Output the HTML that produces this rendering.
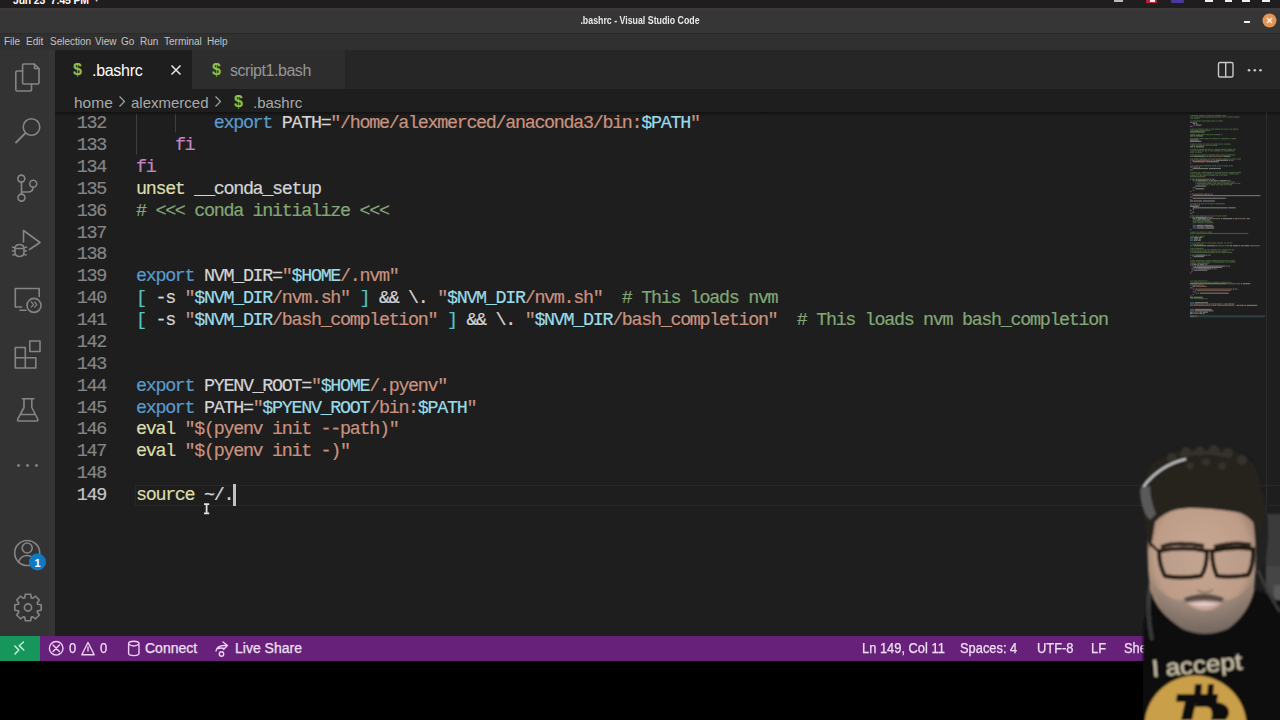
<!DOCTYPE html>
<html><head><meta charset="utf-8">
<style>
*{margin:0;padding:0;box-sizing:border-box}
html,body{width:1280px;height:720px;overflow:hidden;background:#000;font-family:"Liberation Sans",sans-serif}
.abs{position:absolute}
#osbar{left:0;top:0;width:1280px;height:8px;background:#1f1d1e}
#title{left:0;top:8px;width:1280px;height:25px;background:#363636;border-top:3px solid #3b393a}
#menu{left:0;top:33px;width:1280px;height:17px;background:linear-gradient(#2a2a2a 0,#2a2a2a 1px,#303030 1px,#303030 4px,#353535 4px,#353535 5px,#2c2c2c 5px,#2c2c2c 6px,#303030 6px)}
#act{left:0;top:50px;width:55px;height:586px;background:linear-gradient(90deg,#333 0,#333 49px,#363636 49px,#353535 55px)}
#tabs{left:55px;top:50px;width:1225px;height:39px;background:#262626}
#editor{left:55px;top:89px;width:1225px;height:547px;background:#1e1e1e}
#status{left:0;top:636px;width:1280px;height:25px;background:#68217a}
#remote{left:0;top:636px;width:40px;height:25px;background:#17965c}
.row{position:absolute;left:55px;width:1225px;height:21.875px;line-height:21.875px;font-family:"Liberation Mono",monospace;font-size:18.4px;letter-spacing:-1.32px;-webkit-text-stroke:0.2px;white-space:pre;color:#d4d4d4}
.ln{position:absolute;left:0;width:51px;text-align:right;color:#858585}
.ln.cur{color:#c6c6c6}
.cl{position:absolute;left:81px}
.k{color:#5a9bcc}.s{color:#c9927f}.v{color:#9adbe6}.f{color:#dcdcaa}.c{color:#82a676}.p{color:#c586c0}.b{color:#56c4c0}
.ui{position:absolute;white-space:pre}
.menu span{position:absolute;top:36px;font-size:10px;color:#c4c4c4}
.tab{position:absolute;top:50px;height:39px}
.dollar{color:#8dc149;font-weight:bold}
svg{position:absolute;overflow:visible}
.st{position:absolute;top:636px;height:25px;line-height:25px;font-size:14px;color:#f0e0f4;-webkit-text-stroke:0.25px #f0e0f4;transform-origin:0 50%;transform:scaleX(0.92)}
.st.w{transform:none}
.ico{fill:none;stroke:#858585;stroke-width:1.6;stroke-linecap:round;stroke-linejoin:round}
.sico{fill:none;stroke:#f0d0f6;stroke-width:1.4;stroke-linecap:round;stroke-linejoin:round}
</style></head><body>
<div id="osbar" class="abs"></div>
<div class="ui" style="left:13px;top:-6.5px;font-size:10.5px;letter-spacing:-0.2px;color:#fff;font-weight:bold">Jun 23  7:45 PM</div>
<div class="ui" style="left:94px;top:-7px;font-size:10px;color:#ddd">&#9662;</div>
<svg style="left:0;top:0" width="1280" height="10"><rect x="1114" y="0" width="9" height="2" fill="#bbb"/><rect x="1146" y="0" width="11" height="3" rx="1" fill="#c02040"/><rect x="1150" y="0" width="5" height="2" fill="#eee"/><rect x="1171" y="0" width="13" height="3" rx="1" fill="#4a3aa0"/><rect x="1205" y="0" width="8" height="2" fill="#eee"/><rect x="1225" y="0" width="7" height="2" fill="#eee"/><rect x="1242" y="0" width="8" height="2" fill="#eee"/><rect x="1262" y="0" width="8" height="2" fill="#eee"/></svg>
<div id="title" class="abs"></div>
<div class="ui" style="left:0;top:14px;width:1280px;text-align:center;font-size:11px;color:#e8e8e8;font-weight:bold;transform:scaleX(0.8)">.bashrc - Visual Studio Code</div>
<div id="menu" class="abs"></div>
<div class="menu">
<span style="left:4px">File</span><span style="left:26px">Edit</span><span style="left:50px">Selection</span><span style="left:95px">View</span><span style="left:121px">Go</span><span style="left:140px">Run</span><span style="left:164px">Terminal</span><span style="left:207px">Help</span>
</div>
<div id="act" class="abs"></div>
<div id="tabs" class="abs"></div>
<div class="tab" style="left:55px;width:137px;background:#1e1e1e"></div>
<div class="tab" style="left:192px;width:153px;background:#2d2d2d"></div>
<div id="editor" class="abs"></div>
<div class="ui" style="left:73px;top:59px;font-size:16px;line-height:22px"><span class="dollar">$</span></div>
<div class="ui" style="left:92px;top:59.5px;font-size:16px;letter-spacing:-0.3px;line-height:22px;color:#ffffff">.bashrc</div>
<svg style="left:0;top:0" width="1280" height="720">
 <path d="M171.5 65.5 L180.5 74.5 M180.5 65.5 L171.5 74.5" stroke="#e8e8e8" stroke-width="1.5"/>
</svg>
<div class="ui" style="left:212px;top:59px;font-size:16px;line-height:22px"><span class="dollar">$</span></div>
<div class="ui" style="left:230px;top:59.5px;font-size:16px;letter-spacing:-0.45px;line-height:22px;color:#969696">script1.bash</div>
<div class="ui" style="left:74px;top:91.5px;font-size:15.5px;line-height:22px;color:#a9a9a9">home</div>
<div class="ui" style="left:131px;top:91.5px;font-size:15px;line-height:22px;color:#a9a9a9">alexmerced</div>
<div class="ui" style="left:234px;top:91px;font-size:16px;line-height:22px"><span class="dollar">$</span></div>
<div class="ui" style="left:253px;top:91.5px;font-size:15px;line-height:22px;color:#a9a9a9">.bashrc</div>
<svg style="left:0;top:0" width="1280" height="720">
 <path d="M119.5 96.5 L124.5 101.5 L119.5 106.5 M215.5 96.5 L220.5 101.5 L215.5 106.5" fill="none" stroke="#a0a0a0" stroke-width="1.2"/>
 <!-- split editor + more -->
 <rect x="1218.5" y="62.5" width="14.5" height="14.5" rx="1.5" fill="none" stroke="#c8c8c8" stroke-width="1.4"/>
 <path d="M1225.7 62.5 V77" stroke="#c8c8c8" stroke-width="1.4"/>
 <circle cx="1249" cy="70.2" r="1.3" fill="#c8c8c8"/><circle cx="1254.8" cy="70.2" r="1.3" fill="#c8c8c8"/><circle cx="1260.5" cy="70.2" r="1.3" fill="#c8c8c8"/>
 <!-- title buttons -->
 <path d="M1244 22 H1250" stroke="#f0f0f0" stroke-width="2"/>
 <circle cx="1269.5" cy="20.5" r="7" fill="#e0955a"/>
 <path d="M1267 18 L1272 23 M1272 18 L1267 23" stroke="#fff3e0" stroke-width="1.3"/>
 <!-- indent guides -->
 <path d="M136.5 112 V154.5 M175.5 112 V132.5" stroke="#404040" stroke-width="1"/>
</svg>
<!-- scroll shadow -->
<div class="abs" style="left:55px;top:112px;width:1225px;height:4px;background:linear-gradient(#111,rgba(0,0,0,0))"></div>
<div class="row" style="top:113.200px"><span class="ln">132</span><span class="cl">        <span class="k">export</span> PATH=<span class="s">"/home/alexmerced/anaconda3/bin:</span><span class="v">$PATH</span><span class="s">"</span></span></div>
<div class="row" style="top:135.075px"><span class="ln">133</span><span class="cl">    <span class="p">fi</span></span></div>
<div class="row" style="top:156.950px"><span class="ln">134</span><span class="cl"><span class="p">fi</span></span></div>
<div class="row" style="top:178.825px"><span class="ln">135</span><span class="cl"><span class="f">unset</span> __conda_setup</span></div>
<div class="row" style="top:200.700px"><span class="ln">136</span><span class="cl"><span class="c"># &lt;&lt;&lt; conda initialize &lt;&lt;&lt;</span></span></div>
<div class="row" style="top:222.575px"><span class="ln">137</span><span class="cl"></span></div>
<div class="row" style="top:244.450px"><span class="ln">138</span><span class="cl"></span></div>
<div class="row" style="top:266.325px"><span class="ln">139</span><span class="cl"><span class="k">export</span> NVM_DIR=<span class="s">"</span><span class="v">$HOME</span><span class="s">/.nvm"</span></span></div>
<div class="row" style="top:288.200px"><span class="ln">140</span><span class="cl"><span class="b">[</span> -s <span class="s">"</span><span class="v">$NVM_DIR</span><span class="s">/nvm.sh"</span> <span class="b">]</span> &amp;&amp; \. <span class="s">"</span><span class="v">$NVM_DIR</span><span class="s">/nvm.sh"</span>  <span class="c"># This loads nvm</span></span></div>
<div class="row" style="top:310.075px"><span class="ln">141</span><span class="cl"><span class="b">[</span> -s <span class="s">"</span><span class="v">$NVM_DIR</span><span class="s">/bash_completion"</span> <span class="b">]</span> &amp;&amp; \. <span class="s">"</span><span class="v">$NVM_DIR</span><span class="s">/bash_completion"</span>  <span class="c"># This loads nvm bash_completion</span></span></div>
<div class="row" style="top:331.950px"><span class="ln">142</span><span class="cl"></span></div>
<div class="row" style="top:353.825px"><span class="ln">143</span><span class="cl"></span></div>
<div class="row" style="top:375.700px"><span class="ln">144</span><span class="cl"><span class="k">export</span> PYENV_ROOT=<span class="s">"</span><span class="v">$HOME</span><span class="s">/.pyenv"</span></span></div>
<div class="row" style="top:397.575px"><span class="ln">145</span><span class="cl"><span class="k">export</span> PATH=<span class="s">"</span><span class="v">$PYENV_ROOT</span><span class="s">/bin:</span><span class="v">$PATH</span><span class="s">"</span></span></div>
<div class="row" style="top:419.450px"><span class="ln">146</span><span class="cl"><span class="f">eval</span> <span class="s">"$(pyenv init --path)"</span></span></div>
<div class="row" style="top:441.325px"><span class="ln">147</span><span class="cl"><span class="f">eval</span> <span class="s">"$(pyenv init -)"</span></span></div>
<div class="row" style="top:463.200px"><span class="ln">148</span><span class="cl"></span></div>
<div class="row" style="top:485.075px"><span class="ln cur">149</span><span class="cl"><span class="f">source</span> ~/.</span></div>
<!-- current line border -->
<div class="abs" style="left:135px;top:484.5px;width:1145px;height:21.5px;border:1px solid #282828;border-right:none"></div>
<div class="abs" style="left:233px;top:484px;width:2.5px;height:22px;background:#c0c0c0"></div>
<svg style="left:0;top:0" width="300" height="600"><path d="M204 504.2 H209.2 M206.6 504.2 V513.2 M204 513.4 H209.2" stroke="#e0e0e0" stroke-width="1.8" fill="none"/></svg>
<!-- activity icons -->
<svg style="left:0;top:0" width="55" height="636">
 <g class="ico">
  <path d="M22.5 71 H17 Q15.8 71 15.8 72.2 V89.8 Q15.8 91 17 91 H30.3 Q31.5 91 31.5 89.8 V84"/>
  <path d="M23.8 64 H34.5 L39 68.5 V82.8 Q39 84 37.8 84 H23.8 Q22.6 84 22.6 82.8 V65.2 Q22.6 64 23.8 64 Z M34.5 64 V68.5 H39"/>
  <circle cx="31.5" cy="127" r="8.3"/>
  <path d="M25.5 133 L16 142.5" stroke-width="1.9"/>
  <circle cx="21.3" cy="178.6" r="3.5"/><circle cx="33.2" cy="183.8" r="3.5"/><circle cx="21.5" cy="197.6" r="3.5"/>
  <path d="M21.5 182 V194 M33 187.3 Q33 192 28 192 H22"/>
  <path d="M23.5 242 V230.5 L40 242.5 L29.5 249.5"/>
  <path d="M15 249 Q15 244.5 19.5 244.5 Q24 244.5 24 249 V252 Q24 256.5 19.5 256.5 Q15 256.5 15 252 Z M15 248.5 H24 M12.5 247 L15 248 M12.5 251 H15 M13 255 L15.5 254 M26.5 247 L24 248 M26.5 251 H24 M26 255 L23.5 254"/>
  <path d="M21.5 307 H15.3 V288.5 H39.2 V296.5 M20 310.3 H26"/>
  <circle cx="34" cy="305.4" r="7"/>
  <path d="M31.3 302 L33.6 304.6 L31.3 307.2 M34.6 302 L36.9 304.6 L34.6 307.2" stroke-width="1.2"/>
  <path d="M15.3 347.5 H25.3 V368 H15.3 Z M15.3 357.8 H35.8 V368 H25.3 M29.8 341 H40 V351.5 H29.8 Z"/>
  <path d="M22.5 398.8 H33.8 M24 398.8 V407.5 L17.8 419 Q17 421 19 421 H36.5 Q38.5 421 37.7 419 L31.8 407.5 V398.8 M20.5 414.5 H35.2"/>
 </g>
 <circle cx="18.5" cy="465.5" r="1.4" fill="#858585"/><circle cx="27.5" cy="465.5" r="1.4" fill="#858585"/><circle cx="36.5" cy="465.5" r="1.4" fill="#858585"/>
 <g class="ico">
  <circle cx="27.2" cy="553" r="12.5"/>
  <circle cx="27.2" cy="548" r="5"/>
  <path d="M18.5 562 Q21 555.5 27.2 555.5 Q33.4 555.5 36 562"/>
  <path d="M37.6 604.2 L41.2 604.8 L41.2 610.2 L37.6 610.8 L37.2 612.0 L39.3 615.0 L35.5 618.8 L32.5 616.7 L31.3 617.1 L30.7 620.7 L25.3 620.7 L24.7 617.1 L23.5 616.7 L20.5 618.8 L16.7 615.0 L18.8 612.0 L18.4 610.8 L14.8 610.2 L14.8 604.8 L18.4 604.2 L18.8 603.0 L16.7 600.0 L20.5 596.2 L23.5 598.3 L24.7 597.9 L25.3 594.3 L30.7 594.3 L31.3 597.9 L32.5 598.3 L35.5 596.2 L39.3 600.0 L37.2 603.0 Z"/>
  <circle cx="28" cy="607.5" r="3.6"/>
 </g>
 <circle cx="37.5" cy="562" r="8.5" fill="#0e7ac4"/>
 <text x="37.5" y="566.5" text-anchor="middle" font-size="11" font-weight="bold" fill="#fff" font-family="Liberation Sans">1</text>
</svg>
<svg style="left:0;top:0" width="1280" height="720"><defs><filter id="mb" x="-5%" y="-5%" width="110%" height="110%"><feGaussianBlur stdDeviation="0.6"/></filter></defs><g opacity="0.45" filter="url(#mb)"><rect x="1190.0" y="115.0" width="0.7" height="1.2" fill="#6a9955"/><rect x="1191.3" y="115.0" width="6.7" height="1.2" fill="#6a9955"/><rect x="1198.7" y="115.0" width="5.4" height="1.2" fill="#6a9955"/><rect x="1204.7" y="115.0" width="1.3" height="1.2" fill="#6a9955"/><rect x="1206.8" y="115.0" width="4.7" height="1.2" fill="#6a9955"/><rect x="1212.1" y="115.0" width="2.0" height="1.2" fill="#6a9955"/><rect x="1214.8" y="115.0" width="6.0" height="1.2" fill="#6a9955"/><rect x="1221.5" y="115.0" width="4.7" height="1.2" fill="#6a9955"/><rect x="1190.0" y="116.4" width="0.7" height="1.2" fill="#6a9955"/><rect x="1191.3" y="116.4" width="2.0" height="1.2" fill="#6a9955"/><rect x="1194.0" y="116.4" width="28.1" height="1.2" fill="#6a9955"/><rect x="1222.8" y="116.4" width="2.0" height="1.2" fill="#6a9955"/><rect x="1225.5" y="116.4" width="2.0" height="1.2" fill="#6a9955"/><rect x="1228.2" y="116.4" width="4.7" height="1.2" fill="#6a9955"/><rect x="1233.5" y="116.4" width="6.0" height="1.2" fill="#6a9955"/><rect x="1190.0" y="117.7" width="0.7" height="1.2" fill="#6a9955"/><rect x="1191.3" y="117.7" width="2.0" height="1.2" fill="#6a9955"/><rect x="1194.0" y="117.7" width="5.4" height="1.2" fill="#6a9955"/><rect x="1190.0" y="120.4" width="0.7" height="1.2" fill="#6a9955"/><rect x="1191.3" y="120.4" width="1.3" height="1.2" fill="#6a9955"/><rect x="1193.3" y="120.4" width="2.0" height="1.2" fill="#6a9955"/><rect x="1196.0" y="120.4" width="4.7" height="1.2" fill="#6a9955"/><rect x="1201.4" y="120.4" width="9.4" height="1.2" fill="#6a9955"/><rect x="1211.4" y="120.4" width="3.4" height="1.2" fill="#6a9955"/><rect x="1215.5" y="120.4" width="1.3" height="1.2" fill="#6a9955"/><rect x="1217.5" y="120.4" width="5.4" height="1.2" fill="#6a9955"/><rect x="1190.0" y="121.8" width="2.7" height="1.2" fill="#c586c0"/><rect x="1193.3" y="121.8" width="1.3" height="1.2" fill="#d4d4d4"/><rect x="1195.4" y="121.8" width="1.3" height="1.2" fill="#d4d4d4"/><rect x="1192.7" y="123.1" width="2.7" height="1.2" fill="#d4d4d4"/><rect x="1196.0" y="123.1" width="1.3" height="1.2" fill="#d4d4d4"/><rect x="1194.0" y="124.5" width="1.3" height="1.2" fill="#d4d4d4"/><rect x="1196.0" y="124.5" width="5.4" height="1.2" fill="#d4d4d4"/><rect x="1190.0" y="125.8" width="2.7" height="1.2" fill="#c586c0"/><rect x="1190.0" y="128.6" width="0.7" height="1.2" fill="#6a9955"/><rect x="1191.3" y="128.6" width="3.4" height="1.2" fill="#6a9955"/><rect x="1195.4" y="128.6" width="2.0" height="1.2" fill="#6a9955"/><rect x="1198.0" y="128.6" width="6.0" height="1.2" fill="#6a9955"/><rect x="1204.7" y="128.6" width="3.4" height="1.2" fill="#6a9955"/><rect x="1208.8" y="128.6" width="1.3" height="1.2" fill="#6a9955"/><rect x="1210.8" y="128.6" width="3.4" height="1.2" fill="#6a9955"/><rect x="1214.8" y="128.6" width="5.4" height="1.2" fill="#6a9955"/><rect x="1220.8" y="128.6" width="2.7" height="1.2" fill="#6a9955"/><rect x="1224.2" y="128.6" width="3.4" height="1.2" fill="#6a9955"/><rect x="1228.2" y="128.6" width="1.3" height="1.2" fill="#6a9955"/><rect x="1230.2" y="128.6" width="2.0" height="1.2" fill="#6a9955"/><rect x="1232.9" y="128.6" width="5.4" height="1.2" fill="#6a9955"/><rect x="1190.0" y="129.9" width="0.7" height="1.2" fill="#6a9955"/><rect x="1191.3" y="129.9" width="2.0" height="1.2" fill="#6a9955"/><rect x="1194.0" y="129.9" width="4.7" height="1.2" fill="#6a9955"/><rect x="1199.4" y="129.9" width="2.0" height="1.2" fill="#6a9955"/><rect x="1202.1" y="129.9" width="2.7" height="1.2" fill="#6a9955"/><rect x="1205.4" y="129.9" width="4.7" height="1.2" fill="#6a9955"/><rect x="1190.0" y="131.3" width="14.7" height="1.2" fill="#d4d4d4"/><rect x="1190.0" y="134.0" width="0.7" height="1.2" fill="#6a9955"/><rect x="1191.3" y="134.0" width="4.0" height="1.2" fill="#6a9955"/><rect x="1196.0" y="134.0" width="1.3" height="1.2" fill="#6a9955"/><rect x="1198.0" y="134.0" width="2.0" height="1.2" fill="#6a9955"/><rect x="1200.7" y="134.0" width="4.7" height="1.2" fill="#6a9955"/><rect x="1206.1" y="134.0" width="3.4" height="1.2" fill="#6a9955"/><rect x="1210.1" y="134.0" width="3.4" height="1.2" fill="#6a9955"/><rect x="1214.1" y="134.0" width="6.0" height="1.2" fill="#6a9955"/><rect x="1220.8" y="134.0" width="1.3" height="1.2" fill="#6a9955"/><rect x="1190.0" y="135.3" width="3.4" height="1.2" fill="#d4d4d4"/><rect x="1194.0" y="135.3" width="1.3" height="1.2" fill="#d4d4d4"/><rect x="1196.0" y="135.3" width="6.7" height="1.2" fill="#d4d4d4"/><rect x="1190.0" y="138.0" width="0.7" height="1.2" fill="#6a9955"/><rect x="1191.3" y="138.0" width="2.0" height="1.2" fill="#6a9955"/><rect x="1194.0" y="138.0" width="4.7" height="1.2" fill="#6a9955"/><rect x="1199.4" y="138.0" width="4.7" height="1.2" fill="#6a9955"/><rect x="1204.7" y="138.0" width="4.0" height="1.2" fill="#6a9955"/><rect x="1209.4" y="138.0" width="2.0" height="1.2" fill="#6a9955"/><rect x="1212.1" y="138.0" width="5.4" height="1.2" fill="#6a9955"/><rect x="1218.1" y="138.0" width="2.0" height="1.2" fill="#6a9955"/><rect x="1220.8" y="138.0" width="8.0" height="1.2" fill="#6a9955"/><rect x="1229.5" y="138.0" width="1.3" height="1.2" fill="#6a9955"/><rect x="1231.5" y="138.0" width="4.7" height="1.2" fill="#6a9955"/><rect x="1190.0" y="139.4" width="8.7" height="1.2" fill="#d4d4d4"/><rect x="1190.0" y="140.8" width="11.4" height="1.2" fill="#d4d4d4"/><rect x="1190.0" y="143.5" width="0.7" height="1.2" fill="#6a9955"/><rect x="1191.3" y="143.5" width="3.4" height="1.2" fill="#6a9955"/><rect x="1195.4" y="143.5" width="2.0" height="1.2" fill="#6a9955"/><rect x="1198.0" y="143.5" width="4.0" height="1.2" fill="#6a9955"/><rect x="1202.7" y="143.5" width="2.7" height="1.2" fill="#6a9955"/><rect x="1206.1" y="143.5" width="3.4" height="1.2" fill="#6a9955"/><rect x="1210.1" y="143.5" width="2.7" height="1.2" fill="#6a9955"/><rect x="1213.5" y="143.5" width="4.7" height="1.2" fill="#6a9955"/><rect x="1218.8" y="143.5" width="2.7" height="1.2" fill="#6a9955"/><rect x="1222.2" y="143.5" width="1.3" height="1.2" fill="#6a9955"/><rect x="1224.2" y="143.5" width="6.7" height="1.2" fill="#6a9955"/><rect x="1190.0" y="144.8" width="0.7" height="1.2" fill="#6a9955"/><rect x="1191.3" y="144.8" width="4.0" height="1.2" fill="#6a9955"/><rect x="1196.0" y="144.8" width="2.0" height="1.2" fill="#6a9955"/><rect x="1198.7" y="144.8" width="4.0" height="1.2" fill="#6a9955"/><rect x="1203.4" y="144.8" width="1.3" height="1.2" fill="#6a9955"/><rect x="1205.4" y="144.8" width="3.4" height="1.2" fill="#6a9955"/><rect x="1209.4" y="144.8" width="2.0" height="1.2" fill="#6a9955"/><rect x="1212.1" y="144.8" width="5.4" height="1.2" fill="#6a9955"/><rect x="1190.0" y="146.2" width="3.4" height="1.2" fill="#d4d4d4"/><rect x="1194.0" y="146.2" width="1.3" height="1.2" fill="#d4d4d4"/><rect x="1196.0" y="146.2" width="8.0" height="1.2" fill="#d4d4d4"/><rect x="1190.0" y="148.9" width="0.7" height="1.2" fill="#6a9955"/><rect x="1191.3" y="148.9" width="1.3" height="1.2" fill="#6a9955"/><rect x="1193.3" y="148.9" width="2.7" height="1.2" fill="#6a9955"/><rect x="1196.7" y="148.9" width="2.0" height="1.2" fill="#6a9955"/><rect x="1199.4" y="148.9" width="4.7" height="1.2" fill="#6a9955"/><rect x="1204.7" y="148.9" width="2.7" height="1.2" fill="#6a9955"/><rect x="1208.1" y="148.9" width="2.7" height="1.2" fill="#6a9955"/><rect x="1211.4" y="148.9" width="1.3" height="1.2" fill="#6a9955"/><rect x="1213.5" y="148.9" width="0.7" height="1.2" fill="#6a9955"/><rect x="1214.8" y="148.9" width="5.4" height="1.2" fill="#6a9955"/><rect x="1220.8" y="148.9" width="6.0" height="1.2" fill="#6a9955"/><rect x="1227.5" y="148.9" width="4.7" height="1.2" fill="#6a9955"/><rect x="1232.9" y="148.9" width="2.7" height="1.2" fill="#6a9955"/><rect x="1190.0" y="150.2" width="0.7" height="1.2" fill="#6a9955"/><rect x="1191.3" y="150.2" width="3.4" height="1.2" fill="#6a9955"/><rect x="1195.4" y="150.2" width="2.0" height="1.2" fill="#6a9955"/><rect x="1198.0" y="150.2" width="3.4" height="1.2" fill="#6a9955"/><rect x="1202.1" y="150.2" width="2.0" height="1.2" fill="#6a9955"/><rect x="1204.7" y="150.2" width="2.7" height="1.2" fill="#6a9955"/><rect x="1208.1" y="150.2" width="1.3" height="1.2" fill="#6a9955"/><rect x="1210.1" y="150.2" width="2.7" height="1.2" fill="#6a9955"/><rect x="1213.5" y="150.2" width="7.4" height="1.2" fill="#6a9955"/><rect x="1221.5" y="150.2" width="2.0" height="1.2" fill="#6a9955"/><rect x="1224.2" y="150.2" width="10.1" height="1.2" fill="#6a9955"/><rect x="1190.0" y="151.6" width="4.0" height="1.2" fill="#6a9955"/><rect x="1194.7" y="151.6" width="1.3" height="1.2" fill="#6a9955"/><rect x="1196.7" y="151.6" width="5.4" height="1.2" fill="#6a9955"/><rect x="1190.0" y="154.3" width="0.7" height="1.2" fill="#6a9955"/><rect x="1191.3" y="154.3" width="2.7" height="1.2" fill="#6a9955"/><rect x="1194.7" y="154.3" width="2.7" height="1.2" fill="#6a9955"/><rect x="1198.0" y="154.3" width="2.7" height="1.2" fill="#6a9955"/><rect x="1201.4" y="154.3" width="5.4" height="1.2" fill="#6a9955"/><rect x="1207.4" y="154.3" width="2.0" height="1.2" fill="#6a9955"/><rect x="1210.1" y="154.3" width="5.4" height="1.2" fill="#6a9955"/><rect x="1216.1" y="154.3" width="3.4" height="1.2" fill="#6a9955"/><rect x="1220.2" y="154.3" width="4.0" height="1.2" fill="#6a9955"/><rect x="1224.8" y="154.3" width="2.0" height="1.2" fill="#6a9955"/><rect x="1227.5" y="154.3" width="7.4" height="1.2" fill="#6a9955"/><rect x="1190.0" y="155.7" width="0.7" height="1.2" fill="#d4d4d4"/><rect x="1191.3" y="155.7" width="1.3" height="1.2" fill="#d4d4d4"/><rect x="1193.3" y="155.7" width="11.4" height="1.2" fill="#d4d4d4"/><rect x="1205.4" y="155.7" width="0.7" height="1.2" fill="#d4d4d4"/><rect x="1206.8" y="155.7" width="1.3" height="1.2" fill="#d4d4d4"/><rect x="1208.8" y="155.7" width="2.7" height="1.2" fill="#d4d4d4"/><rect x="1212.1" y="155.7" width="10.7" height="1.2" fill="#ce9178"/><rect x="1223.5" y="155.7" width="6.7" height="1.2" fill="#d4d4d4"/><rect x="1190.0" y="158.4" width="0.7" height="1.2" fill="#6a9955"/><rect x="1191.3" y="158.4" width="2.0" height="1.2" fill="#6a9955"/><rect x="1194.0" y="158.4" width="5.4" height="1.2" fill="#6a9955"/><rect x="1200.0" y="158.4" width="7.4" height="1.2" fill="#6a9955"/><rect x="1208.1" y="158.4" width="2.0" height="1.2" fill="#6a9955"/><rect x="1210.8" y="158.4" width="4.0" height="1.2" fill="#6a9955"/><rect x="1215.5" y="158.4" width="2.0" height="1.2" fill="#6a9955"/><rect x="1218.1" y="158.4" width="2.7" height="1.2" fill="#6a9955"/><rect x="1221.5" y="158.4" width="1.3" height="1.2" fill="#6a9955"/><rect x="1223.5" y="158.4" width="3.4" height="1.2" fill="#6a9955"/><rect x="1227.5" y="158.4" width="1.3" height="1.2" fill="#6a9955"/><rect x="1229.5" y="158.4" width="2.0" height="1.2" fill="#6a9955"/><rect x="1232.2" y="158.4" width="4.0" height="1.2" fill="#6a9955"/><rect x="1236.9" y="158.4" width="4.0" height="1.2" fill="#6a9955"/><rect x="1190.0" y="159.7" width="1.3" height="1.2" fill="#c586c0"/><rect x="1192.0" y="159.7" width="0.7" height="1.2" fill="#d4d4d4"/><rect x="1193.3" y="159.7" width="1.3" height="1.2" fill="#d4d4d4"/><rect x="1195.4" y="159.7" width="13.4" height="1.2" fill="#ce9178"/><rect x="1209.4" y="159.7" width="0.7" height="1.2" fill="#d4d4d4"/><rect x="1210.8" y="159.7" width="1.3" height="1.2" fill="#d4d4d4"/><rect x="1212.8" y="159.7" width="0.7" height="1.2" fill="#d4d4d4"/><rect x="1214.1" y="159.7" width="1.3" height="1.2" fill="#d4d4d4"/><rect x="1216.1" y="159.7" width="12.1" height="1.2" fill="#d4d4d4"/><rect x="1228.9" y="159.7" width="1.3" height="1.2" fill="#d4d4d4"/><rect x="1230.9" y="159.7" width="2.7" height="1.2" fill="#c586c0"/><rect x="1192.7" y="161.1" width="12.7" height="1.2" fill="#d4d4d4"/><rect x="1206.1" y="161.1" width="12.7" height="1.2" fill="#d4d4d4"/><rect x="1190.0" y="162.4" width="1.3" height="1.2" fill="#c586c0"/><rect x="1190.0" y="165.2" width="0.7" height="1.2" fill="#6a9955"/><rect x="1191.3" y="165.2" width="2.0" height="1.2" fill="#6a9955"/><rect x="1194.0" y="165.2" width="0.7" height="1.2" fill="#6a9955"/><rect x="1195.4" y="165.2" width="3.4" height="1.2" fill="#6a9955"/><rect x="1199.4" y="165.2" width="4.0" height="1.2" fill="#6a9955"/><rect x="1204.1" y="165.2" width="7.4" height="1.2" fill="#6a9955"/><rect x="1212.1" y="165.2" width="4.0" height="1.2" fill="#6a9955"/><rect x="1216.8" y="165.2" width="1.3" height="1.2" fill="#6a9955"/><rect x="1218.8" y="165.2" width="2.7" height="1.2" fill="#6a9955"/><rect x="1222.2" y="165.2" width="1.3" height="1.2" fill="#6a9955"/><rect x="1224.2" y="165.2" width="4.0" height="1.2" fill="#6a9955"/><rect x="1228.9" y="165.2" width="4.0" height="1.2" fill="#6a9955"/><rect x="1190.0" y="166.5" width="2.7" height="1.2" fill="#c586c0"/><rect x="1193.3" y="166.5" width="4.7" height="1.2" fill="#ce9178"/><rect x="1198.7" y="166.5" width="1.3" height="1.2" fill="#d4d4d4"/><rect x="1192.7" y="167.9" width="15.4" height="1.2" fill="#d4d4d4"/><rect x="1208.8" y="167.9" width="12.1" height="1.2" fill="#d4d4d4"/><rect x="1190.0" y="169.2" width="2.7" height="1.2" fill="#c586c0"/><rect x="1190.0" y="171.9" width="0.7" height="1.2" fill="#6a9955"/><rect x="1191.3" y="171.9" width="6.0" height="1.2" fill="#6a9955"/><rect x="1198.0" y="171.9" width="2.0" height="1.2" fill="#6a9955"/><rect x="1200.7" y="171.9" width="0.7" height="1.2" fill="#6a9955"/><rect x="1202.1" y="171.9" width="4.7" height="1.2" fill="#6a9955"/><rect x="1207.4" y="171.9" width="4.7" height="1.2" fill="#6a9955"/><rect x="1212.8" y="171.9" width="1.3" height="1.2" fill="#6a9955"/><rect x="1214.8" y="171.9" width="2.0" height="1.2" fill="#6a9955"/><rect x="1217.5" y="171.9" width="5.4" height="1.2" fill="#6a9955"/><rect x="1223.5" y="171.9" width="2.0" height="1.2" fill="#6a9955"/><rect x="1226.2" y="171.9" width="2.0" height="1.2" fill="#6a9955"/><rect x="1228.9" y="171.9" width="7.4" height="1.2" fill="#6a9955"/><rect x="1236.9" y="171.9" width="4.0" height="1.2" fill="#6a9955"/><rect x="1190.0" y="173.3" width="0.7" height="1.2" fill="#6a9955"/><rect x="1191.3" y="173.3" width="2.0" height="1.2" fill="#6a9955"/><rect x="1194.0" y="173.3" width="1.3" height="1.2" fill="#6a9955"/><rect x="1196.0" y="173.3" width="4.7" height="1.2" fill="#6a9955"/><rect x="1201.4" y="173.3" width="1.3" height="1.2" fill="#6a9955"/><rect x="1203.4" y="173.3" width="2.0" height="1.2" fill="#6a9955"/><rect x="1206.1" y="173.3" width="5.4" height="1.2" fill="#6a9955"/><rect x="1212.1" y="173.3" width="2.0" height="1.2" fill="#6a9955"/><rect x="1214.8" y="173.3" width="3.4" height="1.2" fill="#6a9955"/><rect x="1218.8" y="173.3" width="2.0" height="1.2" fill="#6a9955"/><rect x="1221.5" y="173.3" width="3.4" height="1.2" fill="#6a9955"/><rect x="1225.5" y="173.3" width="1.3" height="1.2" fill="#6a9955"/><rect x="1227.5" y="173.3" width="0.7" height="1.2" fill="#6a9955"/><rect x="1228.9" y="173.3" width="5.4" height="1.2" fill="#6a9955"/><rect x="1234.9" y="173.3" width="4.0" height="1.2" fill="#6a9955"/><rect x="1190.0" y="174.7" width="0.7" height="1.2" fill="#6a9955"/><rect x="1191.3" y="174.7" width="4.0" height="1.2" fill="#6a9955"/><rect x="1196.0" y="174.7" width="1.3" height="1.2" fill="#6a9955"/><rect x="1198.0" y="174.7" width="1.3" height="1.2" fill="#6a9955"/><rect x="1200.0" y="174.7" width="2.0" height="1.2" fill="#6a9955"/><rect x="1202.7" y="174.7" width="4.0" height="1.2" fill="#6a9955"/><rect x="1207.4" y="174.7" width="1.3" height="1.2" fill="#6a9955"/><rect x="1209.4" y="174.7" width="6.0" height="1.2" fill="#6a9955"/><rect x="1216.1" y="174.7" width="2.0" height="1.2" fill="#6a9955"/><rect x="1218.8" y="174.7" width="1.3" height="1.2" fill="#6a9955"/><rect x="1220.8" y="174.7" width="2.0" height="1.2" fill="#6a9955"/><rect x="1223.5" y="174.7" width="4.0" height="1.2" fill="#6a9955"/><rect x="1190.0" y="176.0" width="15.4" height="1.2" fill="#6a9955"/><rect x="1190.0" y="178.7" width="1.3" height="1.2" fill="#c586c0"/><rect x="1192.0" y="178.7" width="0.7" height="1.2" fill="#d4d4d4"/><rect x="1193.3" y="178.7" width="1.3" height="1.2" fill="#d4d4d4"/><rect x="1195.4" y="178.7" width="14.1" height="1.2" fill="#ce9178"/><rect x="1210.1" y="178.7" width="1.3" height="1.2" fill="#d4d4d4"/><rect x="1212.1" y="178.7" width="2.7" height="1.2" fill="#c586c0"/><rect x="1192.7" y="180.1" width="1.3" height="1.2" fill="#c586c0"/><rect x="1194.7" y="180.1" width="0.7" height="1.2" fill="#d4d4d4"/><rect x="1196.0" y="180.1" width="1.3" height="1.2" fill="#d4d4d4"/><rect x="1198.0" y="180.1" width="8.7" height="1.2" fill="#d4d4d4"/><rect x="1207.4" y="180.1" width="0.7" height="1.2" fill="#d4d4d4"/><rect x="1208.8" y="180.1" width="1.3" height="1.2" fill="#d4d4d4"/><rect x="1210.8" y="180.1" width="2.7" height="1.2" fill="#d4d4d4"/><rect x="1214.1" y="180.1" width="3.4" height="1.2" fill="#d4d4d4"/><rect x="1218.1" y="180.1" width="0.7" height="1.2" fill="#d4d4d4"/><rect x="1219.5" y="180.1" width="8.0" height="1.2" fill="#d4d4d4"/><rect x="1228.2" y="180.1" width="2.7" height="1.2" fill="#c586c0"/><rect x="1195.4" y="181.4" width="0.7" height="1.2" fill="#6a9955"/><rect x="1196.7" y="181.4" width="1.3" height="1.2" fill="#6a9955"/><rect x="1198.7" y="181.4" width="2.7" height="1.2" fill="#6a9955"/><rect x="1202.1" y="181.4" width="3.4" height="1.2" fill="#6a9955"/><rect x="1206.1" y="181.4" width="5.4" height="1.2" fill="#6a9955"/><rect x="1212.1" y="181.4" width="4.0" height="1.2" fill="#6a9955"/><rect x="1216.8" y="181.4" width="2.7" height="1.2" fill="#6a9955"/><rect x="1220.2" y="181.4" width="6.0" height="1.2" fill="#6a9955"/><rect x="1226.8" y="181.4" width="2.7" height="1.2" fill="#6a9955"/><rect x="1230.2" y="181.4" width="4.7" height="1.2" fill="#6a9955"/><rect x="1195.4" y="182.8" width="0.7" height="1.2" fill="#6a9955"/><rect x="1196.7" y="182.8" width="10.1" height="1.2" fill="#6a9955"/><rect x="1207.4" y="182.8" width="3.4" height="1.2" fill="#6a9955"/><rect x="1211.4" y="182.8" width="1.3" height="1.2" fill="#6a9955"/><rect x="1213.5" y="182.8" width="2.7" height="1.2" fill="#6a9955"/><rect x="1216.8" y="182.8" width="4.7" height="1.2" fill="#6a9955"/><rect x="1222.2" y="182.8" width="1.3" height="1.2" fill="#6a9955"/><rect x="1224.2" y="182.8" width="6.0" height="1.2" fill="#6a9955"/><rect x="1230.9" y="182.8" width="3.4" height="1.2" fill="#6a9955"/><rect x="1234.9" y="182.8" width="2.0" height="1.2" fill="#6a9955"/><rect x="1237.6" y="182.8" width="2.7" height="1.2" fill="#6a9955"/><rect x="1195.4" y="184.1" width="0.7" height="1.2" fill="#6a9955"/><rect x="1196.7" y="184.1" width="0.7" height="1.2" fill="#6a9955"/><rect x="1198.0" y="184.1" width="2.7" height="1.2" fill="#6a9955"/><rect x="1201.4" y="184.1" width="3.4" height="1.2" fill="#6a9955"/><rect x="1205.4" y="184.1" width="2.7" height="1.2" fill="#6a9955"/><rect x="1208.8" y="184.1" width="1.3" height="1.2" fill="#6a9955"/><rect x="1210.8" y="184.1" width="4.7" height="1.2" fill="#6a9955"/><rect x="1216.1" y="184.1" width="2.7" height="1.2" fill="#6a9955"/><rect x="1219.5" y="184.1" width="4.0" height="1.2" fill="#6a9955"/><rect x="1224.2" y="184.1" width="2.7" height="1.2" fill="#6a9955"/><rect x="1227.5" y="184.1" width="4.7" height="1.2" fill="#6a9955"/><rect x="1195.4" y="185.5" width="10.7" height="1.2" fill="#d4d4d4"/><rect x="1192.7" y="186.9" width="2.7" height="1.2" fill="#c586c0"/><rect x="1195.4" y="188.2" width="8.7" height="1.2" fill="#d4d4d4"/><rect x="1192.7" y="189.6" width="1.3" height="1.2" fill="#c586c0"/><rect x="1190.0" y="190.9" width="1.3" height="1.2" fill="#c586c0"/><rect x="1190.0" y="193.6" width="1.3" height="1.2" fill="#c586c0"/><rect x="1192.0" y="193.6" width="0.7" height="1.2" fill="#d4d4d4"/><rect x="1193.3" y="193.6" width="10.1" height="1.2" fill="#ce9178"/><rect x="1204.1" y="193.6" width="0.7" height="1.2" fill="#d4d4d4"/><rect x="1205.4" y="193.6" width="2.0" height="1.2" fill="#d4d4d4"/><rect x="1208.1" y="193.6" width="1.3" height="1.2" fill="#d4d4d4"/><rect x="1210.1" y="193.6" width="2.7" height="1.2" fill="#c586c0"/><rect x="1192.7" y="195.0" width="67.7" height="1.2" fill="#d4d4d4"/><rect x="1190.0" y="196.3" width="2.7" height="1.2" fill="#c586c0"/><rect x="1192.7" y="197.7" width="32.8" height="1.2" fill="#d4d4d4"/><rect x="1226.2" y="197.7" width="0.7" height="1.2" fill="#ce9178"/><rect x="1190.0" y="199.1" width="1.3" height="1.2" fill="#c586c0"/><rect x="1190.0" y="200.4" width="3.4" height="1.2" fill="#d4d4d4"/><rect x="1194.0" y="200.4" width="8.0" height="1.2" fill="#d4d4d4"/><rect x="1202.7" y="200.4" width="12.1" height="1.2" fill="#d4d4d4"/><rect x="1190.0" y="203.1" width="0.7" height="1.2" fill="#6a9955"/><rect x="1191.3" y="203.1" width="1.3" height="1.2" fill="#6a9955"/><rect x="1193.3" y="203.1" width="2.7" height="1.2" fill="#6a9955"/><rect x="1196.7" y="203.1" width="1.3" height="1.2" fill="#6a9955"/><rect x="1198.7" y="203.1" width="1.3" height="1.2" fill="#6a9955"/><rect x="1200.7" y="203.1" width="3.4" height="1.2" fill="#6a9955"/><rect x="1204.7" y="203.1" width="2.0" height="1.2" fill="#6a9955"/><rect x="1207.4" y="203.1" width="2.0" height="1.2" fill="#6a9955"/><rect x="1210.1" y="203.1" width="3.4" height="1.2" fill="#6a9955"/><rect x="1214.1" y="203.1" width="1.3" height="1.2" fill="#6a9955"/><rect x="1216.1" y="203.1" width="8.7" height="1.2" fill="#6a9955"/><rect x="1190.0" y="204.5" width="2.7" height="1.2" fill="#c586c0"/><rect x="1193.3" y="204.5" width="4.7" height="1.2" fill="#ce9178"/><rect x="1198.7" y="204.5" width="1.3" height="1.2" fill="#d4d4d4"/><rect x="1190.0" y="205.8" width="8.7" height="1.2" fill="#d4d4d4"/><rect x="1192.7" y="207.2" width="34.8" height="1.2" fill="#d4d4d4"/><rect x="1228.2" y="207.2" width="7.4" height="1.2" fill="#d4d4d4"/><rect x="1192.7" y="208.5" width="1.3" height="1.2" fill="#d4d4d4"/><rect x="1190.0" y="209.9" width="1.3" height="1.2" fill="#d4d4d4"/><rect x="1192.7" y="211.3" width="1.3" height="1.2" fill="#d4d4d4"/><rect x="1190.0" y="212.6" width="2.7" height="1.2" fill="#c586c0"/><rect x="1190.0" y="215.3" width="0.7" height="1.2" fill="#6a9955"/><rect x="1191.3" y="215.3" width="4.0" height="1.2" fill="#6a9955"/><rect x="1196.0" y="215.3" width="3.4" height="1.2" fill="#6a9955"/><rect x="1200.0" y="215.3" width="4.7" height="1.2" fill="#6a9955"/><rect x="1205.4" y="215.3" width="1.3" height="1.2" fill="#6a9955"/><rect x="1207.4" y="215.3" width="1.3" height="1.2" fill="#6a9955"/><rect x="1209.4" y="215.3" width="2.0" height="1.2" fill="#6a9955"/><rect x="1212.1" y="215.3" width="2.7" height="1.2" fill="#6a9955"/><rect x="1215.5" y="215.3" width="2.0" height="1.2" fill="#6a9955"/><rect x="1218.1" y="215.3" width="3.4" height="1.2" fill="#6a9955"/><rect x="1222.2" y="215.3" width="4.7" height="1.2" fill="#6a9955"/><rect x="1190.0" y="216.7" width="1.3" height="1.2" fill="#c586c0"/><rect x="1192.0" y="216.7" width="0.7" height="1.2" fill="#d4d4d4"/><rect x="1193.3" y="216.7" width="1.3" height="1.2" fill="#d4d4d4"/><rect x="1195.4" y="216.7" width="12.1" height="1.2" fill="#d4d4d4"/><rect x="1208.1" y="216.7" width="1.3" height="1.2" fill="#d4d4d4"/><rect x="1210.1" y="216.7" width="2.7" height="1.2" fill="#c586c0"/><rect x="1192.7" y="218.0" width="2.7" height="1.2" fill="#d4d4d4"/><rect x="1196.0" y="218.0" width="1.3" height="1.2" fill="#d4d4d4"/><rect x="1198.0" y="218.0" width="8.0" height="1.2" fill="#d4d4d4"/><rect x="1206.8" y="218.0" width="1.3" height="1.2" fill="#d4d4d4"/><rect x="1208.8" y="218.0" width="2.7" height="1.2" fill="#d4d4d4"/><rect x="1212.1" y="218.0" width="8.0" height="1.2" fill="#ce9178"/><rect x="1220.8" y="218.0" width="1.3" height="1.2" fill="#d4d4d4"/><rect x="1222.8" y="218.0" width="9.4" height="1.2" fill="#d4d4d4"/><rect x="1232.9" y="218.0" width="1.3" height="1.2" fill="#d4d4d4"/><rect x="1234.9" y="218.0" width="2.7" height="1.2" fill="#d4d4d4"/><rect x="1238.2" y="218.0" width="8.0" height="1.2" fill="#ce9178"/><rect x="1247.0" y="218.0" width="2.7" height="1.2" fill="#d4d4d4"/><rect x="1192.7" y="219.4" width="3.4" height="1.2" fill="#569cd6"/><rect x="1196.7" y="219.4" width="4.0" height="1.2" fill="#d4d4d4"/><rect x="1201.4" y="219.4" width="8.7" height="1.2" fill="#d4d4d4"/><rect x="1192.7" y="220.7" width="4.0" height="1.2" fill="#6a9955"/><rect x="1197.4" y="220.7" width="5.4" height="1.2" fill="#6a9955"/><rect x="1203.4" y="220.7" width="8.7" height="1.2" fill="#6a9955"/><rect x="1192.7" y="222.1" width="4.0" height="1.2" fill="#6a9955"/><rect x="1197.4" y="222.1" width="6.7" height="1.2" fill="#6a9955"/><rect x="1204.7" y="222.1" width="8.7" height="1.2" fill="#6a9955"/><rect x="1192.7" y="224.8" width="3.4" height="1.2" fill="#569cd6"/><rect x="1196.7" y="224.8" width="6.7" height="1.2" fill="#d4d4d4"/><rect x="1204.1" y="224.8" width="8.7" height="1.2" fill="#d4d4d4"/><rect x="1192.7" y="226.2" width="3.4" height="1.2" fill="#569cd6"/><rect x="1196.7" y="226.2" width="8.0" height="1.2" fill="#d4d4d4"/><rect x="1205.4" y="226.2" width="8.7" height="1.2" fill="#d4d4d4"/><rect x="1192.7" y="227.5" width="3.4" height="1.2" fill="#569cd6"/><rect x="1196.7" y="227.5" width="8.0" height="1.2" fill="#d4d4d4"/><rect x="1205.4" y="227.5" width="8.7" height="1.2" fill="#d4d4d4"/><rect x="1190.0" y="228.9" width="1.3" height="1.2" fill="#c586c0"/><rect x="1190.0" y="231.6" width="0.7" height="1.2" fill="#6a9955"/><rect x="1191.3" y="231.6" width="4.7" height="1.2" fill="#6a9955"/><rect x="1196.7" y="231.6" width="2.0" height="1.2" fill="#6a9955"/><rect x="1199.4" y="231.6" width="5.4" height="1.2" fill="#6a9955"/><rect x="1205.4" y="231.6" width="2.0" height="1.2" fill="#6a9955"/><rect x="1208.1" y="231.6" width="4.0" height="1.2" fill="#6a9955"/><rect x="1190.0" y="232.9" width="4.7" height="1.2" fill="#6a9955"/><rect x="1195.4" y="232.9" width="52.9" height="1.2" fill="#6a9955"/><rect x="1190.0" y="235.7" width="0.7" height="1.2" fill="#6a9955"/><rect x="1191.3" y="235.7" width="2.7" height="1.2" fill="#6a9955"/><rect x="1194.7" y="235.7" width="2.7" height="1.2" fill="#6a9955"/><rect x="1198.0" y="235.7" width="1.3" height="1.2" fill="#6a9955"/><rect x="1200.0" y="235.7" width="4.7" height="1.2" fill="#6a9955"/><rect x="1190.0" y="237.0" width="3.4" height="1.2" fill="#569cd6"/><rect x="1194.0" y="237.0" width="4.0" height="1.2" fill="#d4d4d4"/><rect x="1198.7" y="237.0" width="3.4" height="1.2" fill="#d4d4d4"/><rect x="1190.0" y="238.4" width="3.4" height="1.2" fill="#569cd6"/><rect x="1194.0" y="238.4" width="4.0" height="1.2" fill="#d4d4d4"/><rect x="1198.7" y="238.4" width="2.0" height="1.2" fill="#d4d4d4"/><rect x="1190.0" y="239.7" width="3.4" height="1.2" fill="#569cd6"/><rect x="1194.0" y="239.7" width="3.4" height="1.2" fill="#d4d4d4"/><rect x="1198.0" y="239.7" width="2.7" height="1.2" fill="#d4d4d4"/><rect x="1190.0" y="242.4" width="0.7" height="1.2" fill="#6a9955"/><rect x="1191.3" y="242.4" width="2.0" height="1.2" fill="#6a9955"/><rect x="1194.0" y="242.4" width="1.3" height="1.2" fill="#6a9955"/><rect x="1196.0" y="242.4" width="4.7" height="1.2" fill="#6a9955"/><rect x="1201.4" y="242.4" width="3.4" height="1.2" fill="#6a9955"/><rect x="1205.4" y="242.4" width="2.0" height="1.2" fill="#6a9955"/><rect x="1208.1" y="242.4" width="2.7" height="1.2" fill="#6a9955"/><rect x="1211.4" y="242.4" width="4.7" height="1.2" fill="#6a9955"/><rect x="1216.8" y="242.4" width="6.0" height="1.2" fill="#6a9955"/><rect x="1224.2" y="242.4" width="2.0" height="1.2" fill="#6a9955"/><rect x="1226.8" y="242.4" width="2.7" height="1.2" fill="#6a9955"/><rect x="1230.2" y="242.4" width="2.0" height="1.2" fill="#6a9955"/><rect x="1190.0" y="243.8" width="0.7" height="1.2" fill="#6a9955"/><rect x="1192.7" y="243.8" width="3.4" height="1.2" fill="#6a9955"/><rect x="1196.7" y="243.8" width="2.0" height="1.2" fill="#6a9955"/><rect x="1199.4" y="243.8" width="3.4" height="1.2" fill="#6a9955"/><rect x="1190.0" y="245.1" width="3.4" height="1.2" fill="#569cd6"/><rect x="1194.0" y="245.1" width="12.1" height="1.2" fill="#d4d4d4"/><rect x="1206.8" y="245.1" width="8.7" height="1.2" fill="#d4d4d4"/><rect x="1216.1" y="245.1" width="1.3" height="1.2" fill="#d4d4d4"/><rect x="1218.1" y="245.1" width="2.7" height="1.2" fill="#ce9178"/><rect x="1221.5" y="245.1" width="1.3" height="1.2" fill="#d4d4d4"/><rect x="1223.5" y="245.1" width="0.7" height="1.2" fill="#d4d4d4"/><rect x="1224.8" y="245.1" width="0.7" height="1.2" fill="#d4d4d4"/><rect x="1226.2" y="245.1" width="0.7" height="1.2" fill="#d4d4d4"/><rect x="1227.5" y="245.1" width="1.3" height="1.2" fill="#d4d4d4"/><rect x="1229.5" y="245.1" width="2.7" height="1.2" fill="#d4d4d4"/><rect x="1232.9" y="245.1" width="5.4" height="1.2" fill="#d4d4d4"/><rect x="1238.9" y="245.1" width="1.3" height="1.2" fill="#d4d4d4"/><rect x="1240.9" y="245.1" width="2.7" height="1.2" fill="#d4d4d4"/><rect x="1244.3" y="245.1" width="4.7" height="1.2" fill="#d4d4d4"/><rect x="1249.6" y="245.1" width="10.1" height="1.2" fill="#ce9178"/><rect x="1190.0" y="247.9" width="0.7" height="1.2" fill="#6a9955"/><rect x="1191.3" y="247.9" width="3.4" height="1.2" fill="#6a9955"/><rect x="1195.4" y="247.9" width="8.0" height="1.2" fill="#6a9955"/><rect x="1190.0" y="249.2" width="0.7" height="1.2" fill="#6a9955"/><rect x="1191.3" y="249.2" width="2.0" height="1.2" fill="#6a9955"/><rect x="1194.0" y="249.2" width="2.0" height="1.2" fill="#6a9955"/><rect x="1196.7" y="249.2" width="2.7" height="1.2" fill="#6a9955"/><rect x="1200.0" y="249.2" width="1.3" height="1.2" fill="#6a9955"/><rect x="1202.1" y="249.2" width="2.0" height="1.2" fill="#6a9955"/><rect x="1204.7" y="249.2" width="2.0" height="1.2" fill="#6a9955"/><rect x="1207.4" y="249.2" width="2.7" height="1.2" fill="#6a9955"/><rect x="1210.8" y="249.2" width="6.0" height="1.2" fill="#6a9955"/><rect x="1217.5" y="249.2" width="2.7" height="1.2" fill="#6a9955"/><rect x="1220.8" y="249.2" width="0.7" height="1.2" fill="#6a9955"/><rect x="1222.2" y="249.2" width="5.4" height="1.2" fill="#6a9955"/><rect x="1228.2" y="249.2" width="2.7" height="1.2" fill="#6a9955"/><rect x="1231.5" y="249.2" width="2.7" height="1.2" fill="#6a9955"/><rect x="1190.0" y="250.6" width="0.7" height="1.2" fill="#6a9955"/><rect x="1191.3" y="250.6" width="10.7" height="1.2" fill="#6a9955"/><rect x="1202.7" y="250.6" width="4.7" height="1.2" fill="#6a9955"/><rect x="1208.1" y="250.6" width="1.3" height="1.2" fill="#6a9955"/><rect x="1210.1" y="250.6" width="4.0" height="1.2" fill="#6a9955"/><rect x="1214.8" y="250.6" width="2.7" height="1.2" fill="#6a9955"/><rect x="1218.1" y="250.6" width="2.7" height="1.2" fill="#6a9955"/><rect x="1221.5" y="250.6" width="6.0" height="1.2" fill="#6a9955"/><rect x="1190.0" y="251.9" width="0.7" height="1.2" fill="#6a9955"/><rect x="1191.3" y="251.9" width="2.0" height="1.2" fill="#6a9955"/><rect x="1194.0" y="251.9" width="21.4" height="1.2" fill="#6a9955"/><rect x="1216.1" y="251.9" width="1.3" height="1.2" fill="#6a9955"/><rect x="1218.1" y="251.9" width="2.0" height="1.2" fill="#6a9955"/><rect x="1220.8" y="251.9" width="5.4" height="1.2" fill="#6a9955"/><rect x="1226.8" y="251.9" width="5.4" height="1.2" fill="#6a9955"/><rect x="1190.0" y="254.6" width="1.3" height="1.2" fill="#c586c0"/><rect x="1192.0" y="254.6" width="0.7" height="1.2" fill="#d4d4d4"/><rect x="1193.3" y="254.6" width="1.3" height="1.2" fill="#d4d4d4"/><rect x="1195.4" y="254.6" width="10.1" height="1.2" fill="#d4d4d4"/><rect x="1206.1" y="254.6" width="1.3" height="1.2" fill="#d4d4d4"/><rect x="1208.1" y="254.6" width="2.7" height="1.2" fill="#c586c0"/><rect x="1192.7" y="256.0" width="0.7" height="1.2" fill="#d4d4d4"/><rect x="1194.0" y="256.0" width="10.1" height="1.2" fill="#d4d4d4"/><rect x="1190.0" y="257.3" width="1.3" height="1.2" fill="#c586c0"/><rect x="1190.0" y="260.1" width="0.7" height="1.2" fill="#6a9955"/><rect x="1191.3" y="260.1" width="4.0" height="1.2" fill="#6a9955"/><rect x="1196.0" y="260.1" width="8.0" height="1.2" fill="#6a9955"/><rect x="1204.7" y="260.1" width="6.7" height="1.2" fill="#6a9955"/><rect x="1212.1" y="260.1" width="5.4" height="1.2" fill="#6a9955"/><rect x="1218.1" y="260.1" width="2.7" height="1.2" fill="#6a9955"/><rect x="1221.5" y="260.1" width="3.4" height="1.2" fill="#6a9955"/><rect x="1225.5" y="260.1" width="2.7" height="1.2" fill="#6a9955"/><rect x="1228.9" y="260.1" width="1.3" height="1.2" fill="#6a9955"/><rect x="1230.9" y="260.1" width="4.0" height="1.2" fill="#6a9955"/><rect x="1190.0" y="261.4" width="0.7" height="1.2" fill="#6a9955"/><rect x="1191.3" y="261.4" width="3.4" height="1.2" fill="#6a9955"/><rect x="1195.4" y="261.4" width="1.3" height="1.2" fill="#6a9955"/><rect x="1197.4" y="261.4" width="2.7" height="1.2" fill="#6a9955"/><rect x="1200.7" y="261.4" width="4.7" height="1.2" fill="#6a9955"/><rect x="1206.1" y="261.4" width="4.7" height="1.2" fill="#6a9955"/><rect x="1211.4" y="261.4" width="1.3" height="1.2" fill="#6a9955"/><rect x="1213.5" y="261.4" width="10.7" height="1.2" fill="#6a9955"/><rect x="1224.8" y="261.4" width="2.0" height="1.2" fill="#6a9955"/><rect x="1227.5" y="261.4" width="8.0" height="1.2" fill="#6a9955"/><rect x="1190.0" y="262.8" width="0.7" height="1.2" fill="#6a9955"/><rect x="1191.3" y="262.8" width="4.7" height="1.2" fill="#6a9955"/><rect x="1196.7" y="262.8" width="12.1" height="1.2" fill="#6a9955"/><rect x="1190.0" y="264.1" width="1.3" height="1.2" fill="#c586c0"/><rect x="1192.0" y="264.1" width="0.7" height="1.2" fill="#d4d4d4"/><rect x="1193.3" y="264.1" width="3.4" height="1.2" fill="#d4d4d4"/><rect x="1197.4" y="264.1" width="2.0" height="1.2" fill="#d4d4d4"/><rect x="1200.0" y="264.1" width="4.0" height="1.2" fill="#d4d4d4"/><rect x="1204.7" y="264.1" width="2.7" height="1.2" fill="#c586c0"/><rect x="1191.3" y="265.5" width="1.3" height="1.2" fill="#c586c0"/><rect x="1193.3" y="265.5" width="0.7" height="1.2" fill="#d4d4d4"/><rect x="1194.7" y="265.5" width="1.3" height="1.2" fill="#d4d4d4"/><rect x="1196.7" y="265.5" width="28.1" height="1.2" fill="#d4d4d4"/><rect x="1225.5" y="265.5" width="1.3" height="1.2" fill="#d4d4d4"/><rect x="1227.5" y="265.5" width="2.7" height="1.2" fill="#c586c0"/><rect x="1192.7" y="266.8" width="0.7" height="1.2" fill="#d4d4d4"/><rect x="1194.0" y="266.8" width="28.1" height="1.2" fill="#d4d4d4"/><rect x="1191.3" y="268.2" width="2.7" height="1.2" fill="#c586c0"/><rect x="1194.7" y="268.2" width="0.7" height="1.2" fill="#d4d4d4"/><rect x="1196.0" y="268.2" width="1.3" height="1.2" fill="#d4d4d4"/><rect x="1198.0" y="268.2" width="13.4" height="1.2" fill="#d4d4d4"/><rect x="1212.1" y="268.2" width="1.3" height="1.2" fill="#d4d4d4"/><rect x="1214.1" y="268.2" width="2.7" height="1.2" fill="#c586c0"/><rect x="1192.7" y="269.6" width="0.7" height="1.2" fill="#d4d4d4"/><rect x="1194.0" y="269.6" width="13.4" height="1.2" fill="#d4d4d4"/><rect x="1191.3" y="270.9" width="1.3" height="1.2" fill="#c586c0"/><rect x="1190.0" y="272.3" width="1.3" height="1.2" fill="#c586c0"/><rect x="1190.0" y="280.4" width="0.7" height="1.2" fill="#6a9955"/><rect x="1191.3" y="280.4" width="2.0" height="1.2" fill="#6a9955"/><rect x="1194.0" y="280.4" width="3.4" height="1.2" fill="#6a9955"/><rect x="1198.0" y="280.4" width="6.7" height="1.2" fill="#6a9955"/><rect x="1205.4" y="280.4" width="2.0" height="1.2" fill="#6a9955"/><rect x="1190.0" y="281.8" width="0.7" height="1.2" fill="#6a9955"/><rect x="1191.3" y="281.8" width="1.3" height="1.2" fill="#6a9955"/><rect x="1193.3" y="281.8" width="5.4" height="1.2" fill="#6a9955"/><rect x="1199.4" y="281.8" width="4.0" height="1.2" fill="#6a9955"/><rect x="1204.1" y="281.8" width="2.7" height="1.2" fill="#6a9955"/><rect x="1207.4" y="281.8" width="3.4" height="1.2" fill="#6a9955"/><rect x="1211.4" y="281.8" width="2.0" height="1.2" fill="#6a9955"/><rect x="1214.1" y="281.8" width="4.7" height="1.2" fill="#6a9955"/><rect x="1219.5" y="281.8" width="1.3" height="1.2" fill="#6a9955"/><rect x="1221.5" y="281.8" width="4.0" height="1.2" fill="#6a9955"/><rect x="1226.2" y="281.8" width="3.4" height="1.2" fill="#6a9955"/><rect x="1230.2" y="281.8" width="1.3" height="1.2" fill="#6a9955"/><rect x="1190.0" y="283.1" width="36.9" height="1.2" fill="#d4d4d4"/><rect x="1227.5" y="283.1" width="8.0" height="1.2" fill="#ce9178"/><rect x="1236.2" y="283.1" width="4.0" height="1.2" fill="#ce9178"/><rect x="1240.9" y="283.1" width="1.3" height="1.2" fill="#d4d4d4"/><rect x="1242.9" y="283.1" width="7.4" height="1.2" fill="#d4d4d4"/><rect x="1190.0" y="284.5" width="1.3" height="1.2" fill="#c586c0"/><rect x="1192.0" y="284.5" width="0.7" height="1.2" fill="#d4d4d4"/><rect x="1193.3" y="284.5" width="1.3" height="1.2" fill="#d4d4d4"/><rect x="1195.4" y="284.5" width="2.0" height="1.2" fill="#d4d4d4"/><rect x="1198.0" y="284.5" width="0.7" height="1.2" fill="#d4d4d4"/><rect x="1199.4" y="284.5" width="1.3" height="1.2" fill="#d4d4d4"/><rect x="1201.4" y="284.5" width="2.7" height="1.2" fill="#c586c0"/><rect x="1192.7" y="285.8" width="2.7" height="1.2" fill="#d4d4d4"/><rect x="1196.0" y="285.8" width="10.7" height="1.2" fill="#ce9178"/><rect x="1190.0" y="287.2" width="2.7" height="1.2" fill="#c586c0"/><rect x="1192.7" y="288.5" width="1.3" height="1.2" fill="#c586c0"/><rect x="1194.7" y="288.5" width="0.7" height="1.2" fill="#d4d4d4"/><rect x="1196.0" y="288.5" width="1.3" height="1.2" fill="#d4d4d4"/><rect x="1198.0" y="288.5" width="34.2" height="1.2" fill="#ce9178"/><rect x="1232.9" y="288.5" width="1.3" height="1.2" fill="#d4d4d4"/><rect x="1234.9" y="288.5" width="2.7" height="1.2" fill="#c586c0"/><rect x="1195.4" y="289.9" width="0.7" height="1.2" fill="#d4d4d4"/><rect x="1196.7" y="289.9" width="34.2" height="1.2" fill="#ce9178"/><rect x="1192.7" y="291.2" width="2.7" height="1.2" fill="#c586c0"/><rect x="1195.4" y="292.6" width="4.0" height="1.2" fill="#569cd6"/><rect x="1200.0" y="292.6" width="28.8" height="1.2" fill="#d4d4d4"/><rect x="1192.7" y="294.0" width="1.3" height="1.2" fill="#c586c0"/><rect x="1190.0" y="295.3" width="1.3" height="1.2" fill="#c586c0"/><rect x="1190.0" y="296.7" width="3.4" height="1.2" fill="#d4d4d4"/><rect x="1194.0" y="296.7" width="8.7" height="1.2" fill="#d4d4d4"/><rect x="1190.0" y="298.0" width="0.7" height="1.2" fill="#6a9955"/><rect x="1191.3" y="298.0" width="2.0" height="1.2" fill="#6a9955"/><rect x="1194.0" y="298.0" width="3.4" height="1.2" fill="#6a9955"/><rect x="1198.0" y="298.0" width="6.7" height="1.2" fill="#6a9955"/><rect x="1205.4" y="298.0" width="2.0" height="1.2" fill="#6a9955"/><rect x="1190.0" y="302.1" width="4.0" height="1.2" fill="#569cd6"/><rect x="1194.7" y="302.1" width="13.4" height="1.2" fill="#d4d4d4"/><rect x="1190.0" y="303.4" width="0.7" height="1.2" fill="#d4d4d4"/><rect x="1191.3" y="303.4" width="1.3" height="1.2" fill="#d4d4d4"/><rect x="1193.3" y="303.4" width="11.4" height="1.2" fill="#ce9178"/><rect x="1205.4" y="303.4" width="0.7" height="1.2" fill="#d4d4d4"/><rect x="1206.8" y="303.4" width="1.3" height="1.2" fill="#d4d4d4"/><rect x="1208.8" y="303.4" width="1.3" height="1.2" fill="#d4d4d4"/><rect x="1210.8" y="303.4" width="11.4" height="1.2" fill="#ce9178"/><rect x="1223.5" y="303.4" width="0.7" height="1.2" fill="#d4d4d4"/><rect x="1224.8" y="303.4" width="2.7" height="1.2" fill="#d4d4d4"/><rect x="1228.2" y="303.4" width="3.4" height="1.2" fill="#d4d4d4"/><rect x="1232.2" y="303.4" width="2.0" height="1.2" fill="#d4d4d4"/><rect x="1190.0" y="304.8" width="0.7" height="1.2" fill="#d4d4d4"/><rect x="1191.3" y="304.8" width="1.3" height="1.2" fill="#d4d4d4"/><rect x="1193.3" y="304.8" width="17.4" height="1.2" fill="#ce9178"/><rect x="1211.4" y="304.8" width="0.7" height="1.2" fill="#d4d4d4"/><rect x="1212.8" y="304.8" width="1.3" height="1.2" fill="#d4d4d4"/><rect x="1214.8" y="304.8" width="1.3" height="1.2" fill="#d4d4d4"/><rect x="1216.8" y="304.8" width="17.4" height="1.2" fill="#ce9178"/><rect x="1235.6" y="304.8" width="0.7" height="1.2" fill="#d4d4d4"/><rect x="1236.9" y="304.8" width="2.7" height="1.2" fill="#d4d4d4"/><rect x="1240.2" y="304.8" width="3.4" height="1.2" fill="#d4d4d4"/><rect x="1244.3" y="304.8" width="2.0" height="1.2" fill="#d4d4d4"/><rect x="1247.0" y="304.8" width="10.1" height="1.2" fill="#d4d4d4"/><rect x="1190.0" y="308.9" width="4.0" height="1.2" fill="#569cd6"/><rect x="1194.7" y="308.9" width="16.8" height="1.2" fill="#d4d4d4"/><rect x="1190.0" y="310.2" width="4.0" height="1.2" fill="#569cd6"/><rect x="1194.7" y="310.2" width="18.8" height="1.2" fill="#d4d4d4"/><rect x="1190.0" y="311.6" width="2.7" height="1.2" fill="#d4d4d4"/><rect x="1193.3" y="311.6" width="5.4" height="1.2" fill="#ce9178"/><rect x="1199.4" y="311.6" width="2.7" height="1.2" fill="#d4d4d4"/><rect x="1202.7" y="311.6" width="5.4" height="1.2" fill="#d4d4d4"/><rect x="1190.0" y="312.9" width="2.7" height="1.2" fill="#d4d4d4"/><rect x="1193.3" y="312.9" width="5.4" height="1.2" fill="#ce9178"/><rect x="1199.4" y="312.9" width="2.7" height="1.2" fill="#d4d4d4"/><rect x="1202.7" y="312.9" width="2.0" height="1.2" fill="#d4d4d4"/><rect x="1190.0" y="315.6" width="4.0" height="1.2" fill="#d4d4d4"/><rect x="1194.7" y="315.6" width="2.0" height="1.2" fill="#d4d4d4"/></g><rect id="mmcur" x="1190" y="315.2" width="75" height="2.2" fill="#3a6a6a" opacity="0.45"/><path d="M1266.5 112 V636" stroke="#2c2c2c" stroke-width="1"/></svg>
<div id="status" class="abs"></div>
<div id="remote" class="abs"></div>
<svg style="left:0;top:0" width="1280" height="720">
 <g class="sico">
  <path d="M23.5 642 L19.2 645.8 L23.8 650 M14.8 646 L18.8 650 L15 654" stroke="#c8f5e0" stroke-width="1.4"/>
  <circle cx="56.2" cy="648.3" r="6.8"/>
  <path d="M53 645 L59.4 651.6 M59.4 645 L53 651.6"/>
  <path d="M88 642.5 L81.8 654.8 H94.2 Z M88 647 V651"/>
  <path d="M128.6 643.5 Q128.6 641.2 133.8 641.2 Q139 641.2 139 643.5 V653.3 Q139 655.6 133.8 655.6 Q128.6 655.6 128.6 653.3 Z M128.6 644 Q131 646 133.8 646 Q136.6 646 139 644"/>
  <path d="M216 651 Q217 645 226 645.5 M223 642 L227.5 645.5 L223.5 649.5 M218 648.5 Q221 647.5 224.5 648.5"/>
  <circle cx="221.5" cy="654" r="2.2"/>
 </g>
</svg>
<div class="st w" style="left:145px">Connect</div>
<div class="st w" style="left:235px">Live Share</div>
<div class="st" style="left:69px">0</div>
<div class="st" style="left:100px">0</div>
<div class="st" style="left:862px">Ln 149, Col 11</div>
<div class="st" style="left:960px">Spaces: 4</div>
<div class="st" style="left:1037px">UTF-8</div>
<div class="st" style="left:1091px">LF</div>
<div class="st" style="left:1124px">Shell Script</div>
<svg style="left:0;top:0" width="1280" height="720">
 <defs>
  <radialGradient id="skin" cx="0.5" cy="0.38" r="0.62">
   <stop offset="0" stop-color="#c8a892"/><stop offset="0.7" stop-color="#bd9d88"/><stop offset="1" stop-color="#85705f"/>
  </radialGradient>
  <linearGradient id="beard" x1="0" y1="0" x2="0" y2="1">
   <stop offset="0" stop-color="#857873" stop-opacity="0"/><stop offset="0.3" stop-color="#857873" stop-opacity="0.45"/><stop offset="1" stop-color="#6f6560" stop-opacity="0.75"/>
  </linearGradient>
  <filter id="soft" x="-10%" y="-10%" width="120%" height="120%"><feGaussianBlur stdDeviation="1.2"/></filter>
 </defs>
 <g filter="url(#soft)">
 <!-- room background bits at right -->
 <rect x="1266" y="514" width="30" height="52" fill="#3b3b3b"/>
 <rect x="1266" y="566" width="30" height="40" fill="#444"/>
 <rect x="1274" y="585" width="30" height="20" fill="#5a5a5a"/>
 <!-- shirt -->
 <path d="M1143 730 L1143 640 Q1143 605 1158 592 Q1178 622 1203 633 Q1232 625 1250 590 Q1268 590 1276 600 L1295 600 L1295 730 Z" fill="#111"/>
 <path id="cable-left" d="M1150 585 Q1146 610 1152 640" stroke="#444" stroke-width="4" fill="none" opacity="0.8"/>
 <!-- right earcup / headphone -->
 <path d="M1244 470 Q1264 478 1268 520 Q1270 562 1258 572 Q1246 574 1245 555 Z" fill="#242424"/>
 <path d="M1258 570 Q1266 590 1280 612" stroke="#3a3a3a" stroke-width="3" fill="none"/>
 <!-- face -->
 <path d="M1150 515 Q1200 500 1252 512 Q1258 550 1254 590 Q1248 615 1228 628 Q1205 638 1182 628 Q1158 614 1150 590 Q1145 550 1150 515 Z" fill="url(#skin)"/>
 <!-- beard -->
 <path d="M1150 575 Q1156 612 1182 629 Q1205 639 1228 629 Q1250 614 1254 575 Q1245 598 1226 600 Q1205 594 1180 600 Q1160 598 1150 575 Z" fill="url(#beard)"/>
 <!-- mustache & mouth -->
 <path d="M1184 598 Q1204 590 1224 598 L1222 602 Q1204 598 1186 602 Z" fill="#5a4c47"/>
 <path d="M1186 603 Q1204 599 1222 603 Q1206 618 1186 603 Z" fill="#c9a69c"/>
 <path d="M1190 604 Q1204 601 1218 604 Q1204 608 1190 604 Z" fill="#e3d0c8"/>
 <!-- hair -->
 <path d="M1143 510 Q1139 474 1156 460 Q1170 451 1185 450 Q1195 446 1205 449 Q1215 445 1228 449 Q1245 452 1256 468 Q1266 490 1262 540 Q1254 515 1236 512 Q1210 508 1190 508 Q1168 508 1155 522 Q1152 545 1150 548 Q1144 530 1143 510 Z" fill="#25211e"/>
 <path d="M1180 456 Q1200 450 1225 455" stroke="#3a3833" stroke-width="4" fill="none" opacity="0.7"/>
 <g id="curls" fill="#34322d"><circle cx="1172" cy="458" r="5"/><circle cx="1186" cy="452" r="5"/><circle cx="1200" cy="451" r="4.5"/><circle cx="1214" cy="450" r="5"/><circle cx="1228" cy="453" r="5"/><circle cx="1242" cy="460" r="5"/><circle cx="1206" cy="462" r="4"/><circle cx="1222" cy="466" r="4"/><circle cx="1190" cy="466" r="3.5"/></g>
 <!-- headphone band highlight + left cup -->
 <path d="M1143 487 Q1160 465 1186 459" stroke="#d4d4d4" stroke-width="2.2" fill="none"/>
 <path d="M1140 488 Q1140 510 1150 520 L1156 514 Q1150 500 1150 486 Z" fill="#5a5a5a"/>
 <!-- glasses -->
 <path d="M1161 547 Q1175 541 1204 546" stroke="#2e221d" stroke-width="4" fill="none"/>
 <path d="M1214 547 Q1235 541 1251 545" stroke="#2e221d" stroke-width="4" fill="none"/>
 <path d="M1159 551 Q1183 546 1207 551 Q1207 568 1201 576 Q1180 579 1165 576 Q1159 565 1159 551 Z" fill="#a89890" fill-opacity="0.12" stroke="#1e120c" stroke-width="4"/>
 <path d="M1212 551 Q1233 546 1253 549 Q1254 565 1248 575 Q1232 578 1217 576 Q1212 565 1212 551 Z" fill="#a89890" fill-opacity="0.12" stroke="#1e120c" stroke-width="4"/>
 <path d="M1206 552 Q1209 549 1213 552" stroke="#24160f" stroke-width="3" fill="none"/>
 <path d="M1159 552 L1149 542" stroke="#24160f" stroke-width="2.5" fill="none"/>
 <!-- nose shade -->
 <path d="M1197 590 Q1205 595 1213 590" stroke="#8c7266" stroke-width="2" fill="none"/>
 <!-- I accept -->
 <text x="1152" y="673" transform="rotate(-5 1197 662)" font-family="Liberation Sans" font-size="23" fill="#c9c0a6" stroke="#c9c0a6" stroke-width="0.4" textLength="90" lengthAdjust="spacingAndGlyphs">l accept</text>
 <!-- bitcoin -->
 <circle cx="1195.5" cy="726.5" r="51" fill="#c99f4a"/>
 <g fill="#0c0c0c">
  <path d="M1195 684 H1202 L1201 697 H1194 Z M1208 684 H1214 L1213 697 H1207 Z"/>
  <path d="M1177 694 H1218 L1217 702 H1176 Z"/>
  <path d="M1185 702 H1196 L1192 720 H1181 Z"/>
  <path d="M1196 702 H1216 Q1230 704 1229 714 Q1228 718 1225 720 H1211 Q1214 708 1207 707 H1195 Z"/>
 </g>
 </g>
</svg>

</body></html>
